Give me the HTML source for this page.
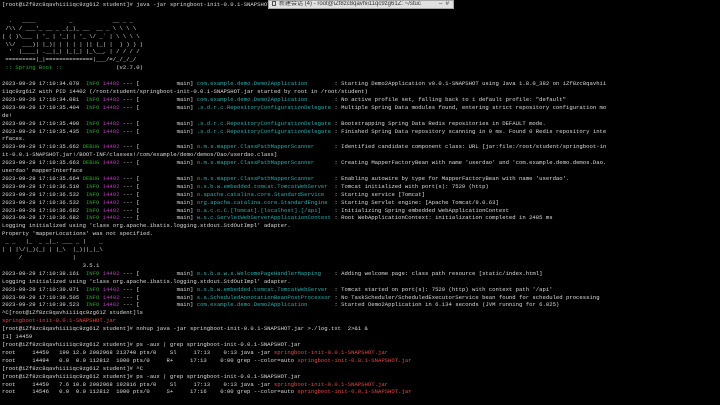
<!DOCTYPE html>
<html><head><meta charset="utf-8"><style>
html,body{margin:0;padding:0;background:#000;width:720px;height:405px;overflow:hidden}
pre{margin:0;position:absolute;left:2px;top:1px;font-family:"Liberation Mono","Noto Sans CJK SC",monospace;font-size:5.6px;line-height:7.9px;color:#dadada;white-space:pre}
.g{color:#22a822}.m{color:#c030c0}.c{color:#20b0b0}.r{color:#f04040}.sg{color:#22a822}
#tab{position:absolute;left:268px;top:0;width:186px;height:9px;background:#e0e0e0;border:1px solid #a8a8a8;box-sizing:border-box;font-family:"Liberation Sans","Noto Sans CJK SC",sans-serif;font-size:6px;line-height:7px;color:#333;white-space:nowrap;overflow:hidden}
#tab .ic{display:inline-block;width:4px;height:5px;border:1px solid #555;margin:0 3px 0 3px;vertical-align:-1px;box-sizing:border-box}
#tab .rt{position:absolute;right:4px;top:0}
</style></head><body>
<pre>[root@iZf8zc8qavhii11qc9zg61Z student]# java -jar springboot-init-0.0.1-SNAPSHOT.jar

  .   ____          _            __ _ _
 /\\ / ___'_ __ _ _(_)_ __  __ _ \ \ \ \
( ( )\___ | '_ | '_| | '_ \/ _` | \ \ \ \
 \\/  ___)| |_)| | | | | || (_| |  ) ) ) )
  '  |____| .__|_| |_|_| |_\__, | / / / /
 =========|_|==============|___/=/_/_/_/
<span class="sg"> :: Spring Boot :: </span>               (v2.7.0)

2023-09-29 17:10:34.078  <span class="g">INFO</span> <span class="m">14402</span> --- [           main] <span class="c">com.example.demo.Demo2Application       </span> : Starting Demo2Application v0.0.1-SNAPSHOT using Java 1.8.0_382 on iZf8zc8qavhii
11qc9zg61Z with PID 14402 (/root/student/springboot-init-0.0.1-SNAPSHOT.jar started by root in /root/student)
2023-09-29 17:10:34.081  <span class="g">INFO</span> <span class="m">14402</span> --- [           main] <span class="c">com.example.demo.Demo2Application       </span> : No active profile set, falling back to 1 default profile: "default"
2023-09-29 17:10:35.404  <span class="g">INFO</span> <span class="m">14402</span> --- [           main] <span class="c">.s.d.r.c.RepositoryConfigurationDelegate</span> : Multiple Spring Data modules found, entering strict repository configuration mo
de!
2023-09-29 17:10:35.408  <span class="g">INFO</span> <span class="m">14402</span> --- [           main] <span class="c">.s.d.r.c.RepositoryConfigurationDelegate</span> : Bootstrapping Spring Data Redis repositories in DEFAULT mode.
2023-09-29 17:10:35.435  <span class="g">INFO</span> <span class="m">14402</span> --- [           main] <span class="c">.s.d.r.c.RepositoryConfigurationDelegate</span> : Finished Spring Data repository scanning in 9 ms. Found 0 Redis repository inte
rfaces.
2023-09-29 17:10:35.662 <span class="g">DEBUG</span> <span class="m">14402</span> --- [           main] <span class="c">o.m.s.mapper.ClassPathMapperScanner     </span> : Identified candidate component class: URL [jar:file:/root/student/springboot-in
it-0.0.1-SNAPSHOT.jar!/BOOT-INF/classes!/com/example/demo/demos/Dao/userdao.class]
2023-09-29 17:10:35.663 <span class="g">DEBUG</span> <span class="m">14402</span> --- [           main] <span class="c">o.m.s.mapper.ClassPathMapperScanner     </span> : Creating MapperFactoryBean with name 'userdao' and 'com.example.demo.demos.Dao.
userdao' mapperInterface
2023-09-29 17:10:35.664 <span class="g">DEBUG</span> <span class="m">14402</span> --- [           main] <span class="c">o.m.s.mapper.ClassPathMapperScanner     </span> : Enabling autowire by type for MapperFactoryBean with name 'userdao'.
2023-09-29 17:10:36.510  <span class="g">INFO</span> <span class="m">14402</span> --- [           main] <span class="c">o.s.b.w.embedded.tomcat.TomcatWebServer </span> : Tomcat initialized with port(s): 7529 (http)
2023-09-29 17:10:36.532  <span class="g">INFO</span> <span class="m">14402</span> --- [           main] <span class="c">o.apache.catalina.core.StandardService  </span> : Starting service [Tomcat]
2023-09-29 17:10:36.532  <span class="g">INFO</span> <span class="m">14402</span> --- [           main] <span class="c">org.apache.catalina.core.StandardEngine </span> : Starting Servlet engine: [Apache Tomcat/9.0.63]
2023-09-29 17:10:36.682  <span class="g">INFO</span> <span class="m">14402</span> --- [           main] <span class="c">o.a.c.c.C.[Tomcat].[localhost].[/api]   </span> : Initializing Spring embedded WebApplicationContext
2023-09-29 17:10:36.682  <span class="g">INFO</span> <span class="m">14402</span> --- [           main] <span class="c">w.s.c.ServletWebServerApplicationContext</span> : Root WebApplicationContext: initialization completed in 2485 ms
Logging initialized using 'class org.apache.ibatis.logging.stdout.StdOutImpl' adapter.
Property 'mapperLocations' was not specified.
 _ _   |_  _ _|_. ___ _ |    _
| | |\/|_)(_| | |_\  |_)||_|_\
     /               |
                        3.5.1
2023-09-29 17:10:38.161  <span class="g">INFO</span> <span class="m">14402</span> --- [           main] <span class="c">o.s.b.a.w.s.WelcomePageHandlerMapping   </span> : Adding welcome page: class path resource [static/index.html]
Logging initialized using 'class org.apache.ibatis.logging.stdout.StdOutImpl' adapter.
2023-09-29 17:10:39.071  <span class="g">INFO</span> <span class="m">14402</span> --- [           main] <span class="c">o.s.b.w.embedded.tomcat.TomcatWebServer </span> : Tomcat started on port(s): 7529 (http) with context path '/api'
2023-09-29 17:10:39.505  <span class="g">INFO</span> <span class="m">14402</span> --- [           main] <span class="c">s.a.ScheduledAnnotationBeanPostProcessor</span> : No TaskScheduler/ScheduledExecutorService bean found for scheduled processing
2023-09-29 17:10:39.523  <span class="g">INFO</span> <span class="m">14402</span> --- [           main] <span class="c">com.example.demo.Demo2Application       </span> : Started Demo2Application in 6.134 seconds (JVM running for 6.825)
^C[root@iZf8zc8qavhii11qc9zg61Z student]ls
<span class="r">springboot-init-0.0.1-SNAPSHOT.jar</span>
[root@iZf8zc8qavhii11qc9zg61Z student]# nohup java -jar springboot-init-0.0.1-SNAPSHOT.jar &gt;./log.txt  2&gt;&amp;1 &amp;
[1] 14459
[root@iZf8zc8qavhii11qc9zg61Z student]# ps -aux | grep springboot-init-0.0.1-SNAPSHOT.jar
root     14459   190 12.0 2982968 213740 pts/0    Sl     17:13    0:13 java -jar <span class="r">springboot-init-0.0.1-SNAPSHOT.jar</span>
root     14494   0.0  0.0 112812  1000 pts/0     R+     17:13    0:00 grep --color=auto <span class="r">springboot-init-0.0.1-SNAPSHOT.jar</span>
[root@iZf8zc8qavhii11qc9zg61Z student]# ^C
[root@iZf8zc8qavhii11qc9zg61Z student]# ps -aux | grep springboot-init-0.0.1-SNAPSHOT.jar
root     14459   7.6 10.8 2982968 192816 pts/0    Sl     17:13    0:13 java -jar <span class="r">springboot-init-0.0.1-SNAPSHOT.jar</span>
root     14546   0.0  0.0 112812  1000 pts/0     S+     17:16    0:00 grep --color=auto <span class="r">springboot-init-0.0.1-SNAPSHOT.jar</span>
</pre>
<div id="tab"><span class="ic"></span>新建会话 (4) - root@iZf8zc8qavhii11qc9zg61Z: ~/stuc<span class="rt">–&nbsp; #</span></div>
</body></html>
